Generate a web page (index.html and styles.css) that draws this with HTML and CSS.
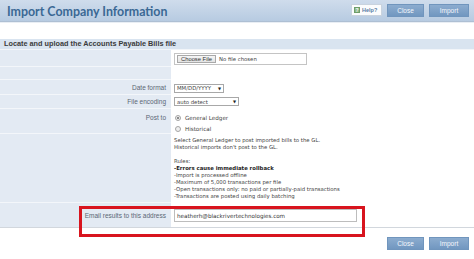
FILE: index.html
```html
<!DOCTYPE html>
<html>
<head>
<meta charset="utf-8">
<link rel="stylesheet" href="styles.css">
</head>
<body>
<div class="page">
  <div class="header">
    <div class="title">Import Company Information</div>
    <div class="actions">
      <span class="help"><span class="help-icon">?</span>Help?</span>
      <span class="btn btn-close">Close</span>
      <span class="btn btn-import">Import</span>
    </div>
  </div>
  <div class="spacer"></div>
  <div class="section-title">Locate and upload the Accounts Payable Bills file</div>
  <div class="form">
    <div class="label row-file"></div>
    <div class="field row-file">
      <span class="filebox"><span class="choose">Choose File</span><span class="nofile">No file chosen</span></span>
    </div>

    <div class="label row-blank"></div>
    <div class="field row-blank"></div>

    <div class="label row-date">Date format</div>
    <div class="field row-date"><span class="select sel-date"><span>MM/DD/YYYY</span><span class="arrow">▼</span></span></div>

    <div class="label row-enc">File encoding</div>
    <div class="field row-enc"><span class="select sel-enc"><span>auto detect</span><span class="arrow">▼</span></span></div>

    <div class="label row-post">Post to</div>
    <div class="field row-post">
      <div class="radio-line"><span class="radio checked"></span>General Ledger</div>
      <div class="radio-line"><span class="radio"></span>Historical</div>
    </div>

    <div class="label row-desc"></div>
    <div class="field row-desc desc">
      <div>Select General Ledger to post imported bills to the GL.</div>
      <div>Historical imports don't post to the GL.</div>
      <div>&nbsp;</div>
      <div>Rules:</div>
      <div class="bold">-Errors cause immediate rollback</div>
      <div>-Import is processed offline</div>
      <div>-Maximum of 5,000 transactions per file</div>
      <div>-Open transactions only: no paid or partially-paid transactions</div>
      <div>-Transactions are posted using daily batching</div>
    </div>

    <div class="label row-email">Email results to this address</div>
    <div class="field row-email"><span class="email">heatherh@blackrivertechnologies.com</span></div>
  </div>
  <div class="footer">
    <span class="btn btn-close">Close</span>
    <span class="btn btn-import">Import</span>
  </div>
  <div class="highlight"></div>
</div>
</body>
</html>
```
FILE: styles.css
```css
html, body {
  margin: 0;
  padding: 0;
  background: #ffffff;
}
body {
  font-family: "Liberation Sans", Arial, sans-serif;
  color: #444;
}
.page {
  position: relative;
  width: 474px;
  height: 259px;
  overflow: hidden;
}
.header {
  height: 22px;
  box-sizing: border-box;
  background: linear-gradient(#cfdcec, #b7cbe1);
  border-bottom: 1px solid #aebfd3;
  display: flex;
  align-items: center;
  justify-content: space-between;
  padding: 0 5px 0 7px;
}
.title {
  font-family: "Lato", "Open Sans", sans-serif;
  font-weight: 700;
  font-size: 12.4px;
  color: #3a6894;
  margin-top: 1px;
}
.actions {
  display: flex;
  align-items: center;
  gap: 5px;
  margin-top: -1px;
}
.help {
  display: flex;
  align-items: center;
  height: 12px;
  width: 31px;
  box-sizing: border-box;
  background: #fbfcfd;
  border: 1px solid #c9d3de;
  font-size: 5.5px;
  font-weight: 700;
  color: #5a7ea5;
  padding-left: 2px;
  gap: 2px;
}
.help-icon {
  display: inline-flex;
  align-items: center;
  justify-content: center;
  width: 6px;
  height: 6px;
  background: #8fb88a;
  color: #fff;
  font-size: 5px;
  border: 1px solid #6e9d69;
  box-sizing: border-box;
}
.btn {
  display: inline-flex;
  align-items: center;
  justify-content: center;
  height: 13px;
  box-sizing: border-box;
  background: linear-gradient(#8caccf, #7197c0);
  border: 1px solid #7095bd;
  color: #f4f8fc;
  font-size: 6.5px;
}
.btn-close { width: 37px; }
.btn-import { width: 40px; }
.spacer {
  height: 17px;
  border-top: 1px solid #e9eef4;
  box-sizing: border-box;
}
.section-title {
  height: 11px;
  box-sizing: border-box;
  background: #d9e4f0;
  border-bottom: 1px solid #f2f5f9;
  font-size: 7.3px;
  font-weight: 700;
  color: #3b3b3b;
  padding-left: 4px;
  line-height: 10px;
}
.form {
  display: grid;
  grid-template-columns: 171px 1fr;
}
.label {
  background: #e3eaf3;
  border-bottom: 1px solid #f3f6fa;
  font-size: 6.5px;
  color: #5b6773;
  text-align: right;
  padding-right: 5px;
  display: flex;
  align-items: center;
  justify-content: flex-end;
  box-sizing: border-box;
}
.field {
  padding-left: 3px;
  display: flex;
  align-items: center;
  box-sizing: border-box;
  font-family: "DejaVu Sans", Verdana, sans-serif;
  font-size: 5.35px;
  color: #444;
}
.row-file { height: 17px; }
.row-blank { height: 13px; }
.row-date { height: 15px; }
.row-enc { height: 14px; }
.row-post { height: 25px; }
.row-desc { height: 69px; }
.row-email { height: 25px; border-bottom: 1px solid #d2d7dd; }

.filebox {
  display: flex;
  align-items: center;
  width: 133px;
  height: 12px;
  box-sizing: border-box;
  border: 1px solid #c4c4c4;
  padding-left: 2px;
  margin-top: 1px;
}
.choose {
  font-family: "Liberation Sans", Arial, sans-serif;
  font-size: 5.8px;
  color: #333;
  background: linear-gradient(#f6f6f6, #e3e3e3);
  border: 1px solid #a9a9a9;
  height: 8px;
  line-height: 7px;
  padding: 0 3px;
  box-sizing: border-box;
}
.nofile {
  margin-left: 3px;
}
.select {
  display: flex;
  align-items: center;
  justify-content: space-between;
  height: 9px;
  box-sizing: border-box;
  border: 1px solid #a8a8a8;
  padding: 0 2px;
  background: #fff;
}
.sel-date { width: 50px; margin-top: 1px; }
.sel-enc { width: 65px; margin-top: -1px; }
.arrow { font-size: 4px; color: #222; }
.row-post.field {
  flex-direction: column;
  align-items: flex-start;
  justify-content: flex-start;
  padding-top: 4px;
}
.row-post.label {
  align-items: flex-start;
  padding-top: 5px;
}
.radio-line {
  display: flex;
  align-items: center;
  height: 12px;
  font-size: 5.6px;
}
.radio {
  width: 6px;
  height: 6px;
  box-sizing: border-box;
  border-radius: 50%;
  border: 1px solid #a5a5a5;
  background: #f0f0f0;
  margin: 0 4px 0 1px;
  position: relative;
}
.radio.checked::after {
  content: "";
  position: absolute;
  left: 1px;
  top: 1px;
  width: 2px;
  height: 2px;
  border-radius: 50%;
  background: #6a6a6a;
}
.desc {
  flex-direction: column;
  align-items: flex-start;
  justify-content: flex-start;
  padding-top: 3px;
  line-height: 7px;
}
.bold { font-weight: 700; color: #222; }
.email {
  display: flex;
  align-items: center;
  width: 183px;
  height: 13px;
  box-sizing: border-box;
  border: 1px solid #bdbdbd;
  padding-left: 2px;
  margin-top: 1px;
  font-size: 5.6px;
  color: #333;
}
.footer {
  display: flex;
  justify-content: flex-end;
  gap: 5px;
  padding: 9px 5px 0 0;
}
.highlight {
  position: absolute;
  left: 79px;
  top: 206px;
  width: 286px;
  height: 31px;
  box-sizing: border-box;
  border: 3px solid #d8141e;
}
```
